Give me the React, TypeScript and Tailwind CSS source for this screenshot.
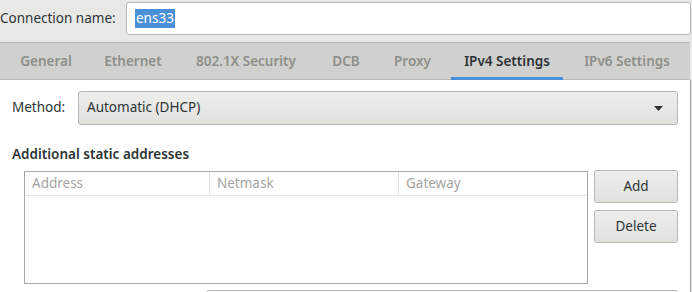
import React from "react";

const tabs: { label: string; w: string }[] = [
  { label: "General", w: "w-[84px]" },
  { label: "Ethernet", w: "w-[90px]" },
  { label: "802.1X Security", w: "w-[136px]" },
  { label: "DCB", w: "w-[64px]" },
  { label: "Proxy", w: "w-[69px]" },
  { label: "IPv4 Settings", w: "w-[120px]" },
  { label: "IPv6 Settings", w: "w-[120px]" },
];

export default function App() {
  return (
    <div
      className="w-[692px] h-[292px] overflow-hidden bg-[#e8e8e7] text-[#2e3436] text-[13.5px] leading-none"
      style={{ fontFamily: '"Noto Sans", "DejaVu Sans", sans-serif' }}
    >
      {/* Connection name row */}
      <div className="flex h-[42px] pt-[2px]">
        <div className="w-[126px] h-[33px] flex items-center">Connection name:</div>
        <div className="w-[565px] h-[33px] bg-white border border-[#b6b6b3] rounded-[3px] flex items-center pl-[8px]">
          <span className="bg-[#4a90d9] text-white h-[19px] flex items-center px-[1px]">ens33</span>
        </div>
      </div>

      {/* Tab bar */}
      <div className="w-[690px] h-[38px] bg-[#d0d0ce] border-t border-b border-[#b6b6b3] flex pl-[4px] whitespace-nowrap">
        {tabs.map((t) => {
          const active = t.label === "IPv4 Settings";
          return (
            <div key={t.label} className={`${t.w} flex flex-col`}>
              <div
                className={
                  active
                    ? "flex-1 flex items-center justify-center font-semibold text-[#2e3436] pt-[3px]"
                    : "flex-1 flex items-center justify-center font-semibold text-[#8d8f8a] pt-[1px]"
                }
              >
                {t.label}
              </div>
              {active ? <div className="mx-[4px] h-[3px] bg-[#4a90d9] -mb-[1px]" /> : null}
            </div>
          );
        })}
      </div>

      {/* Content */}
      <div className="w-[691px] h-[212px] bg-white border-r border-[#a1a1a1] pt-[11px] pl-[12px]">
        <div className="flex items-center h-[34px]">
          <div className="w-[66px]">Method:</div>
          <div className="w-[600px] h-[34px] border border-[#b6b6b3] rounded-[3px] bg-gradient-to-b from-[#eeeeec] to-[#e0e0dd] flex items-center pl-[8px] pr-[14px]">
            <span className="flex-1">Automatic (DHCP)</span>
            <svg width="9" height="5" viewBox="0 0 9 5">
              <path d="M0 0 H9 L4.5 5 Z" fill="#2e3436" />
            </svg>
          </div>
        </div>

        <div className="mt-[22px] h-[16px] font-semibold flex items-center">Additional static addresses</div>

        <div className="flex gap-[6px] mt-[7px] pl-[12px]">
          <div className="w-[564px] h-[113px] mt-[1px] border border-[#a8a8a6] bg-white">
            <div className="flex h-[24px] border-b border-[#e3e3e1] text-[#a4a4a2]">
              <div className="w-[185px] border-r border-[#e3e3e1] pl-[7px] flex items-center">Address</div>
              <div className="w-[189px] border-r border-[#e3e3e1] pl-[7px] flex items-center">Netmask</div>
              <div className="flex-1 pl-[7px] flex items-center">Gateway</div>
            </div>
          </div>
          <div className="flex flex-col gap-[7px]">
            <div className="w-[84px] h-[33px] border border-[#b6b6b3] rounded-[3px] bg-gradient-to-b from-[#eeeeec] to-[#e0e0dd] flex items-center justify-center">
              Add
            </div>
            <div className="w-[84px] h-[33px] border border-[#b6b6b3] rounded-[3px] bg-gradient-to-b from-[#eeeeec] to-[#e0e0dd] flex items-center justify-center">
              Delete
            </div>
          </div>
        </div>

        <div className="ml-[194px] mt-[6px] w-[472px] h-[20px] border border-[#b6b6b3] rounded-[3px]" />
      </div>
    </div>
  );
}
